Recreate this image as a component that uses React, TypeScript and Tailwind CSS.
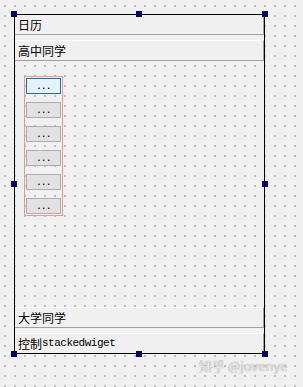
import React from "react";

const dots =
  "bg-fixed bg-[radial-gradient(circle,#b2b2b2_0.6px,transparent_1.2px)] bg-size-[10px_10px] bg-position-[0px_1px]";

const cjk = "font-['SimSun','Noto_Sans_CJK_SC',sans-serif]";

function DotButton({ focused }: { focused?: boolean }) {
  return (
    <div
      className={`h-[16px] w-[35px] flex items-center justify-center border ${
        focused ? "bg-[#e5f1fb] border-[#1f6f9f]" : "bg-[#e1e1e1] border-[#adadad]"
      }`}
    >
      <span className="font-['Liberation_Mono',monospace] text-[9px] leading-none font-bold text-black pt-[3px] tracking-[-0.5px]">
        ...
      </span>
    </div>
  );
}

export default function App() {
  return (
    <div className={`relative w-[303px] h-[387px] bg-[#f0f0f0] overflow-hidden ${dots}`}>
      <div className="pt-[14px] pl-[14px]">
        {/* toolbox frame */}
        <div className="w-[251px] h-[340px] border border-black bg-[#f0f0f0] flex flex-col">
          <div className={`h-[20px] shrink-0 flex items-center pl-[3px] border-b border-r border-b-[#a0a0a0] border-r-[#a0a0a0] text-[12px] text-black ${cjk}`}>
            日历
          </div>
          <div className="h-[5px] shrink-0" />
          <div className={`h-[21px] shrink-0 flex items-center pl-[3px] border-t border-b border-r border-t-white border-b-[#a0a0a0] border-r-[#a0a0a0] text-[12px] text-black ${cjk}`}>
            高中同学
          </div>

          {/* page content */}
          <div className={`flex-1 ${dots}`}>
            <div className="ml-[9px] mt-[15px] w-[39px] border border-[#e39a9a] p-[1px] flex flex-col gap-[8px]">
              <DotButton focused />
              <DotButton />
              <DotButton />
              <DotButton />
              <DotButton />
              <DotButton />
            </div>
          </div>

          <div className={`h-[21px] shrink-0 flex items-center pl-[3px] border-t border-b border-r border-t-white border-b-[#a0a0a0] border-r-[#a0a0a0] text-[12px] text-black ${cjk}`}>
            大学同学
          </div>
          <div className="h-[5px] shrink-0" />
          <div className={`h-[20px] shrink-0 flex items-center pl-[3px] border-t border-r border-t-white border-r-[#a0a0a0] text-[12px] text-black ${cjk}`}>
            控制<span className="font-['Liberation_Mono',monospace] text-[11px] tracking-[-0.5px]">stackedwiget</span>
          </div>
        </div>
      </div>

      {/* selection handles */}
      <div className="absolute left-[11px] top-[11px] w-[6px] h-[6px] bg-[#000066]" />
      <div className="absolute left-[136px] top-[11px] w-[6px] h-[6px] bg-[#000066]" />
      <div className="absolute left-[262px] top-[11px] w-[6px] h-[6px] bg-[#000066]" />
      <div className="absolute left-[11px] top-[181px] w-[6px] h-[6px] bg-[#000066]" />
      <div className="absolute left-[262px] top-[181px] w-[6px] h-[6px] bg-[#000066]" />
      <div className="absolute left-[11px] top-[351px] w-[6px] h-[6px] bg-[#000066]" />
      <div className="absolute left-[136px] top-[351px] w-[6px] h-[6px] bg-[#000066]" />
      <div className="absolute left-[262px] top-[351px] w-[6px] h-[6px] bg-[#000066]" />

      {/* watermark */}
      <div className="absolute left-[199px] top-[358px] text-[13px] leading-[15px] text-[#e2e2e2] font-['Noto_Sans_CJK_SC',sans-serif] [text-shadow:0_0_1px_#8a8a8a] whitespace-nowrap">
        知乎 @jovenye
      </div>
    </div>
  );
}
